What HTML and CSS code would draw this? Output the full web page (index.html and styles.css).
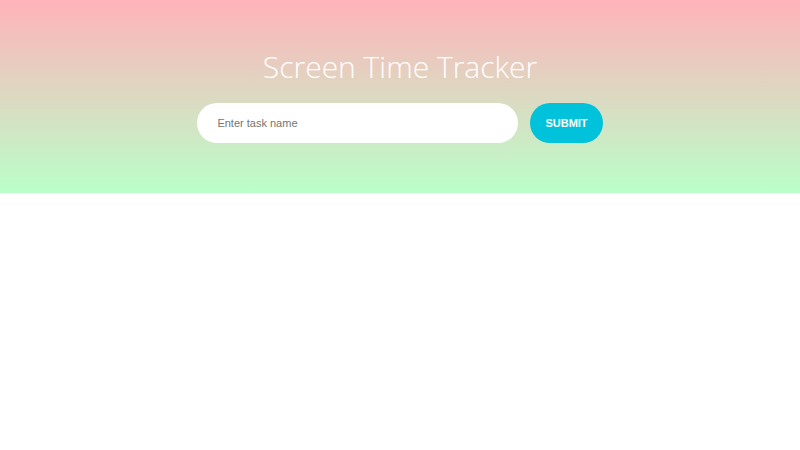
FILE: index.html
```html
<!DOCTYPE html>
<html lang="en">
<head>
  <meta charset="utf-8">
  <meta name="viewport" content="width=device-width, initial-scale=1">
  <title>Screen Time Tracker</title>
  <link rel="stylesheet" href="styles.css">
</head>
<body>
  <header class="hero">
    <h1 class="title">Screen Time Tracker</h1>
    <form class="task-form">
      <input class="task-input" type="text" name="task" placeholder="Enter task name" aria-label="Task name">
      <button class="submit" type="submit">SUBMIT</button>
    </form>
  </header>
</body>
</html>
```

FILE: styles.css
```css
* {
  box-sizing: border-box;
}

body {
  margin: 0;
  font-family: "Open Sans", sans-serif;
  background: #fff;
}

.hero {
  padding: 45px 20px 50px;
  background: linear-gradient(#ffb3ba, #baffc9);
}

.title {
  margin: 0 0 14px;
  font-size: 30px;
  font-weight: 300;
  line-height: 44px;
  text-align: center;
  color: #fff;
}

.task-form {
  display: flex;
  justify-content: center;
  gap: 12px;
}

.task-input,
.submit {
  height: 40px;
  border: 0;
  border-radius: 20px;
  font-family: "Liberation Sans", sans-serif;
  font-size: 11px;
}

.task-input {
  flex: 0 1 321px;
  min-width: 0;
  padding: 0 20px;
  background: #fff;
}

.submit {
  padding: 0 15px;
  font-weight: 700;
  color: #fff;
  background: #00c2da;
  cursor: pointer;
}
```
